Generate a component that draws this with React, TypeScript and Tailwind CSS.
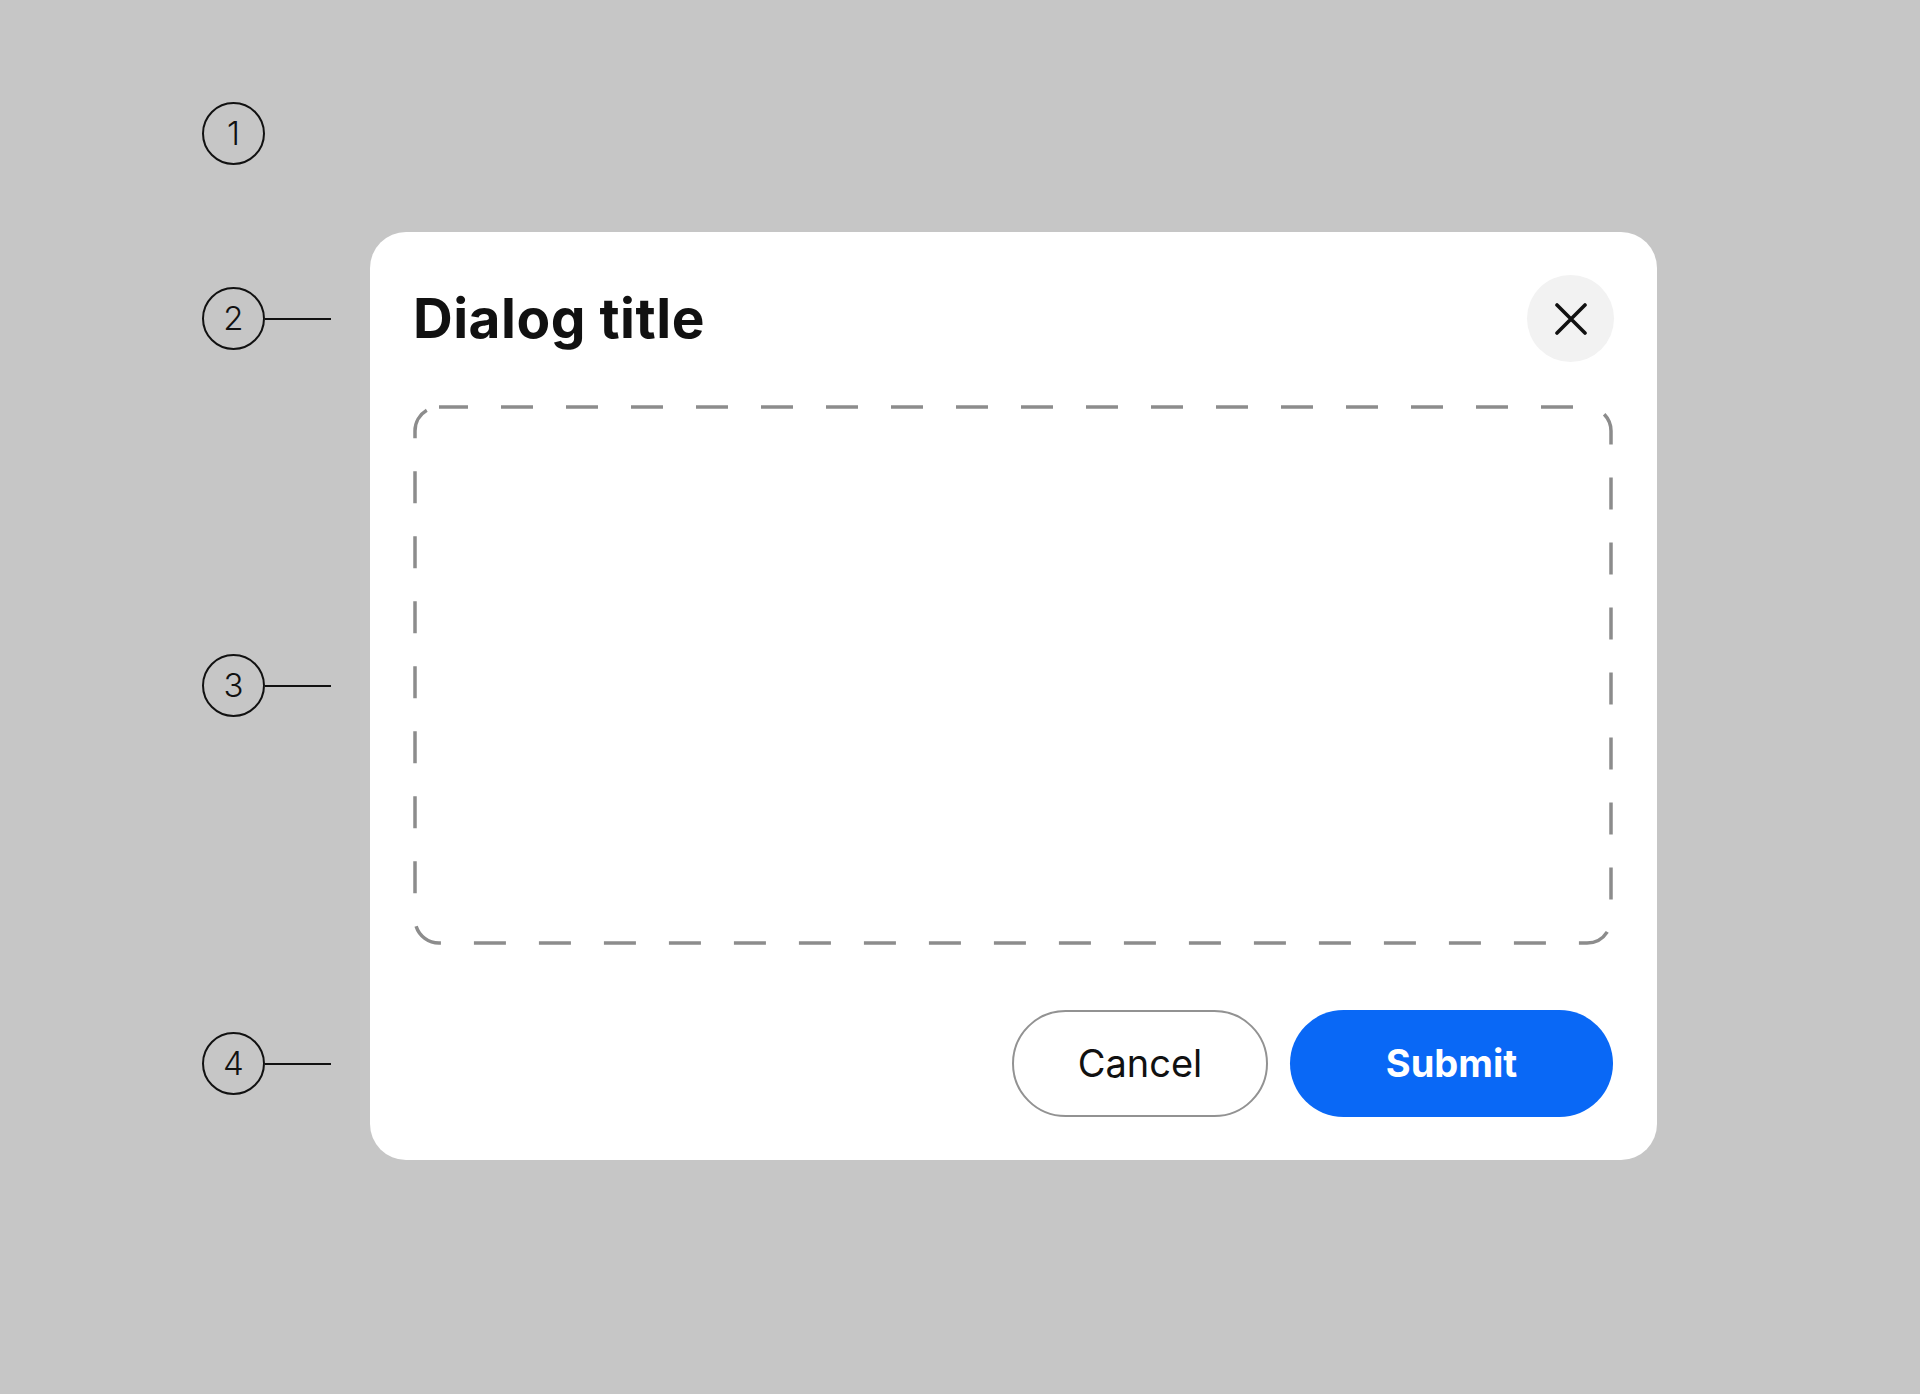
import React from "react";

function Marker({ n, line, top }: { n: string; line?: boolean; top: string }) {
  return (
    <div className={`absolute left-[202px] flex items-center ${top}`}>
      <div className="flex h-[63px] w-[63px] items-center justify-center rounded-full border-2 border-[#111111]">
        <span className="text-[33px] font-light leading-none text-[#111111]" style={{ fontFamily: "Inter, 'Noto Sans', sans-serif" }}>
          {n}
        </span>
      </div>
      {line && <div className="h-[2px] w-[66px] bg-[#111111]" />}
    </div>
  );
}

export default function App() {
  return (
    <div
      className="relative min-h-[1394px] w-full bg-[#c6c6c6] pl-[370px] pt-[232px]"
      style={{ fontFamily: "Inter, 'Noto Sans', sans-serif" }}
    >
      <Marker n="1" top="top-[102px]" />
      <Marker n="2" line top="top-[287px]" />
      <Marker n="3" line top="top-[654px]" />
      <Marker n="4" line top="top-[1032px]" />

      <div className="flex w-[1287px] flex-col rounded-[36px] bg-white p-[43px]">
        <div className="flex h-[87px] items-center justify-between">
          <h1 className="text-[55px] font-bold leading-none tracking-[0.5px] text-[#111111]">Dialog title</h1>
          <button className="flex h-[87px] w-[87px] items-center justify-center rounded-full bg-[#f2f2f2]">
            <svg width="32" height="32" viewBox="0 0 32 32" fill="none">
              <path d="M2 2L30 30M30 2L2 30" stroke="#111111" strokeWidth="3.6" strokeLinecap="round" />
            </svg>
          </button>
        </div>

        <div className="relative mt-[43px] h-[540px] w-[1200px]">
          <svg className="absolute inset-0" width="1200" height="540">
            <rect
              x="2"
              y="2"
              width="1196"
              height="536"
              rx="24"
              fill="none"
              stroke="#8c8c8c"
              strokeWidth="3.5"
              strokeDasharray="32 33"
              strokeDashoffset="3"
            />
          </svg>
        </div>

        <div className="mt-[65px] flex justify-end gap-[22px] pr-[1px]">
          <button className="flex h-[107px] w-[256px] items-center justify-center rounded-full border-2 border-[#929292] bg-white text-[38px] font-normal text-[#111111]">
            Cancel
          </button>
          <button className="flex h-[107px] w-[323px] items-center justify-center rounded-full bg-[#0968f6] text-[38px] font-bold text-white">
            Submit
          </button>
        </div>
      </div>
    </div>
  );
}
